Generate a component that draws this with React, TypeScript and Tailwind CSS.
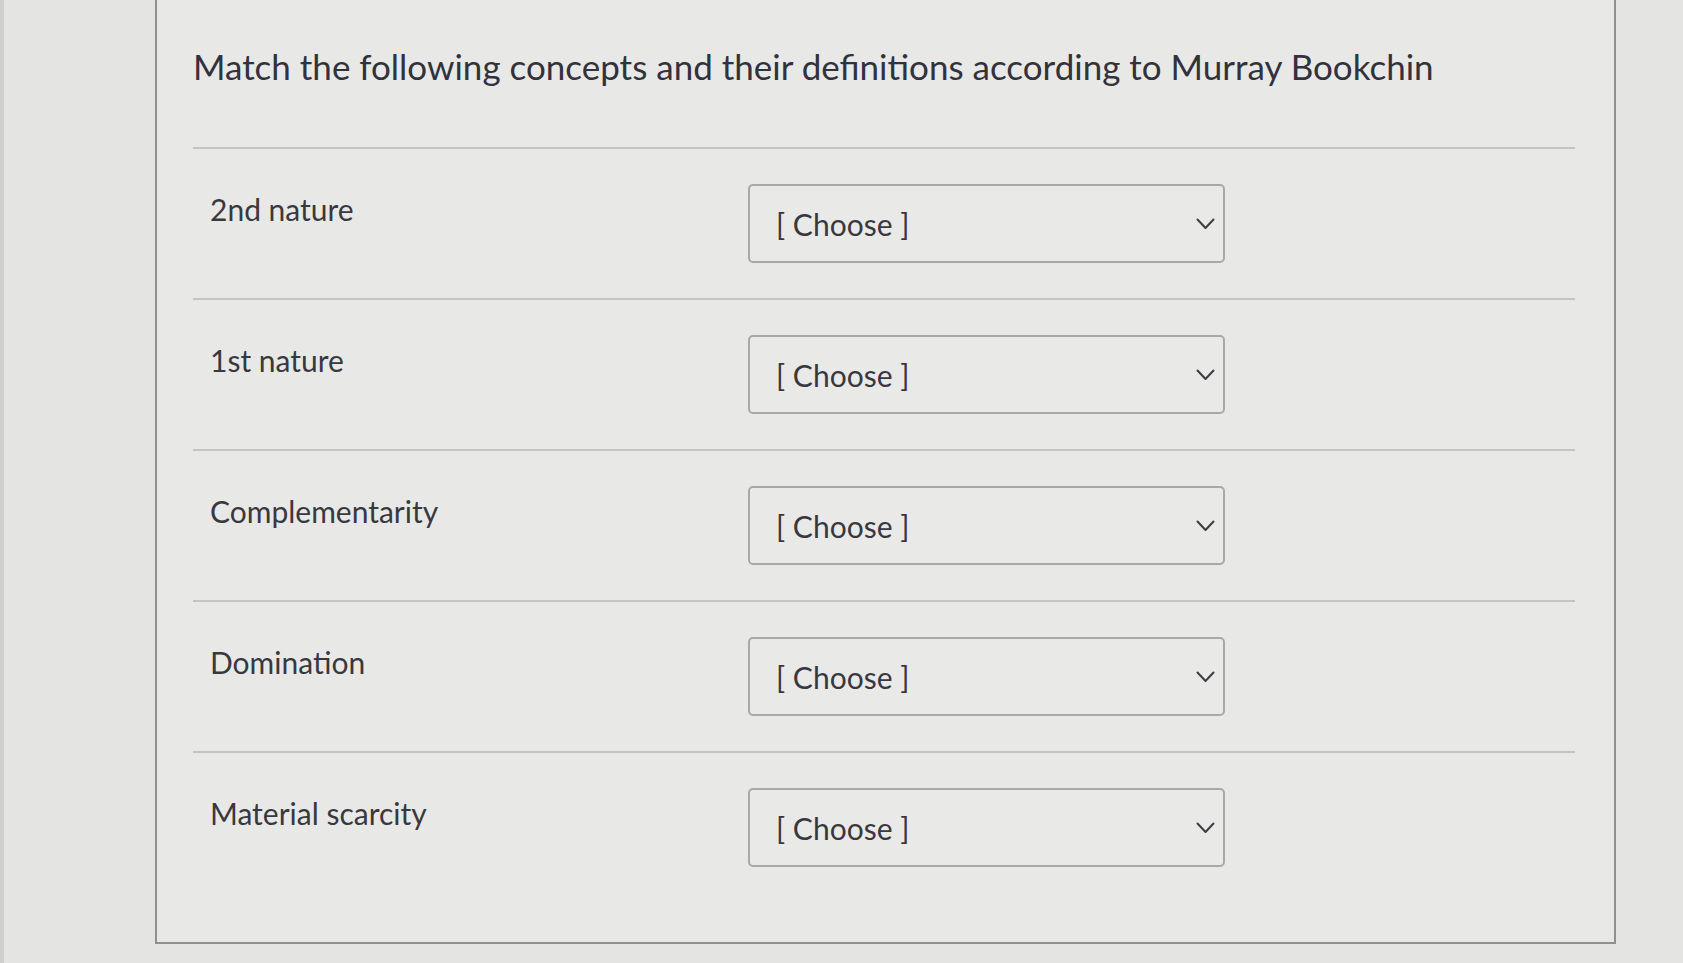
import React from "react";

const items = ["2nd nature", "1st nature", "Complementarity", "Domination", "Material scarcity"];

function Chevron() {
  return (
    <svg width="19" height="12" viewBox="0 0 19 12" fill="none" className="shrink-0">
      <polyline points="1.5,1.5 9.5,10 17.5,1.5" stroke="#3c3c42" strokeWidth="2" strokeLinecap="round" strokeLinejoin="round" />
    </svg>
  );
}

function Row({ label, last }: { label: string; last: boolean }) {
  return (
    <div className="border-t-2 border-[#c3c4c3]">
      <div className={`flex items-start pt-[35px] ${last ? "pb-0" : "pb-[35px]"}`}>
        <div className="w-[555px] shrink-0 pl-[17px] pt-[7px] text-[30px] leading-[36px] text-[#38383f]">{label}</div>
        <div className="flex h-[79px] w-[477px] items-center justify-between rounded-[5px] border-2 border-[#a7a8a9] bg-[#e9eae8] pl-[26px] pr-[8px]">
          <span className="text-[30px] leading-[36px] text-[#38383f]">[ Choose ]</span>
          <Chevron />
        </div>
      </div>
    </div>
  );
}

export default function App() {
  return (
    <div
      className="h-[963px] w-full overflow-hidden border-l-4 border-[#cfd0ce] bg-[#e4e5e3] pl-[151px]"
      style={{ fontFamily: "Lato, 'Open Sans', sans-serif" }}
    >
      <div className="h-[944px] w-[1461px] border-x-2 border-b-2 border-[#8f9092] bg-[#e8e9e7] pl-[36px] pr-[39px] pt-[45px]">
        <h1 className="text-[35px] leading-[42px] font-normal text-[#32323d]">
          Match the following concepts and their definitions according to Murray Bookchin
        </h1>
        <div className="mt-[60px]">
          {items.map((label, i) => (
            <Row key={label} label={label} last={i === items.length - 1} />
          ))}
        </div>
      </div>
    </div>
  );
}
